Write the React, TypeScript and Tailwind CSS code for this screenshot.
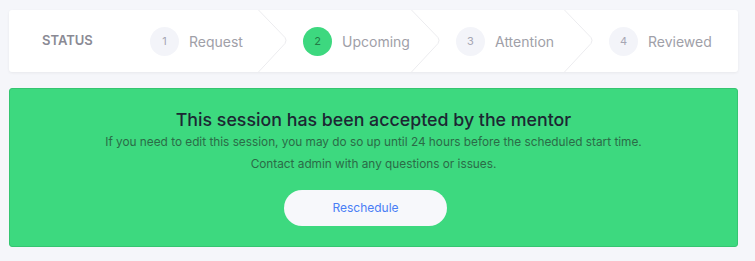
import React from "react";

const steps = [
  { n: 1, label: "Request", active: false },
  { n: 2, label: "Upcoming", active: true },
  { n: 3, label: "Attention", active: false },
  { n: 4, label: "Reviewed", active: false },
];

function Chevron() {
  return (
    <svg width="30" height="62" viewBox="0 0 30 62" className="shrink-0">
      <path
        d="M0.5 0 L27 27.5 Q29 30 27 33.5 L0.5 62"
        fill="none"
        stroke="#ececef"
        strokeWidth="1"
      />
    </svg>
  );
}

export default function App() {
  return (
    <div
      className="w-[755px] h-[261px] bg-[#f5f6fa] pt-[10px] pl-[9px]"
      style={{ fontFamily: "Inter, 'Noto Sans', sans-serif" }}
    >
      {/* Status stepper */}
      <div className="w-[729px] h-[62px] bg-white rounded-[3px] shadow-[0_1px_3px_rgba(0,0,0,0.06)] flex items-center">
        <div className="w-[126px] pl-[33px] text-[13px] font-semibold text-[#8a8a94]">
          STATUS
        </div>
        {steps.map((s, i) => (
          <div key={s.n} className={`flex items-center h-[62px] pl-[15px] ${i < 3 ? "w-[153px]" : "flex-1"}`}>
            <div
              className={`w-[29px] h-[29px] rounded-full flex items-center justify-center text-[11px] shrink-0 ${
                s.active ? "bg-[#3dd87f] text-[#247a46]" : "bg-[#f3f4f9] text-[#a6a6b3]"
              }`}
            >
              {s.n}
            </div>
            <span className="ml-[10px] text-[14px] text-[#a0a0a8]">{s.label}</span>
            <div className="flex-1" />
            {i < 3 && <Chevron />}
          </div>
        ))}
      </div>

      {/* Accepted banner */}
      <div className="mt-[16px] w-[729px] h-[159px] bg-[#3dd97f] border border-[#35c571] rounded-[3px] flex flex-col items-center pt-[19px]">
        <h2 className="text-[17.8px] font-medium text-[#1c2733] leading-[24px]">
          This session has been accepted by the mentor
        </h2>
        <p className="text-[11.8px] text-[#2b6b47] leading-[20px]">
          If you need to edit this session, you may do so up until 24 hours before the scheduled start time.
        </p>
        <p className="mt-[2px] text-[11.8px] text-[#2b6b47] leading-[20px]">
          Contact admin with any questions or issues.
        </p>
        <button className="mt-[16px] mr-[16px] w-[163px] h-[36px] rounded-full bg-[#f7f8fb] text-[12px] text-[#4a7ef5]">
          Reschedule
        </button>
      </div>
    </div>
  );
}
